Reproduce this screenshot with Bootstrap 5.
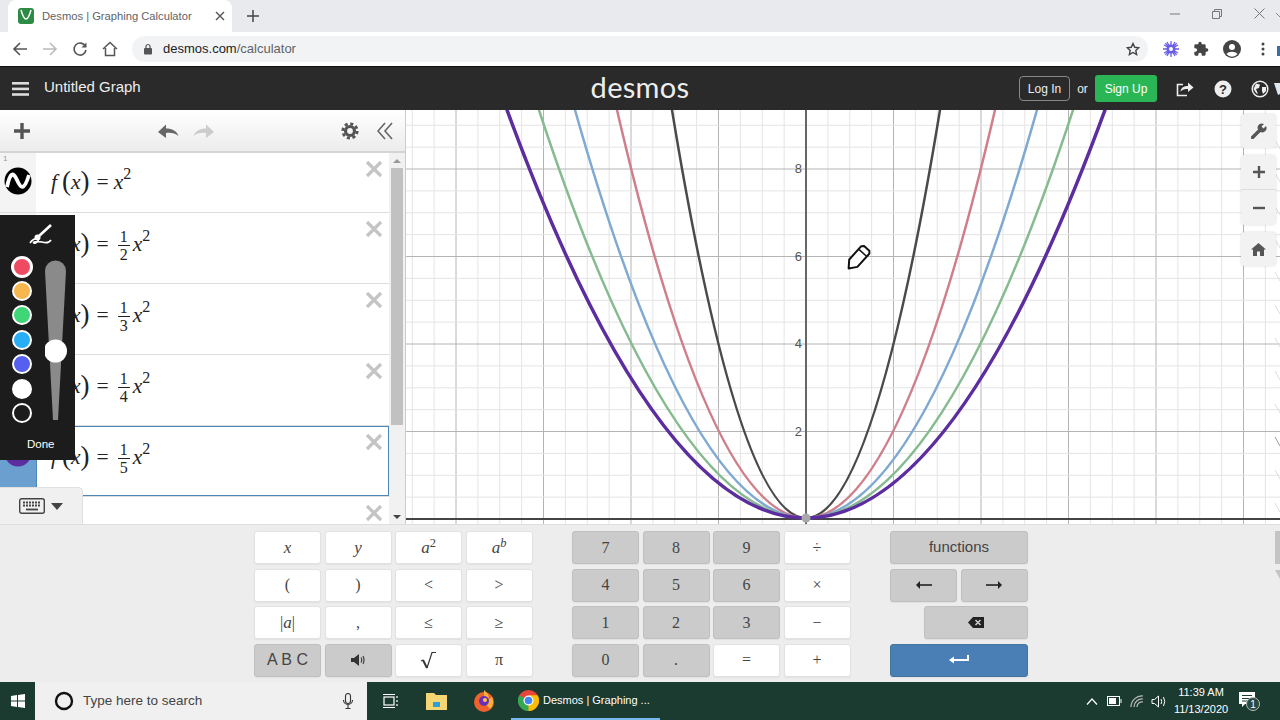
<!DOCTYPE html>
<html lang="en">

<head>
    <meta charset="UTF-8" />
    <meta name="viewport" content="width=device-width, initial-scale=1.0" />
    <title>Desmos | Graphing Calculator</title>
    <link href="https://cdn.jsdelivr.net/npm/bootstrap@5.3.3/dist/css/bootstrap.min.css" rel="stylesheet">
    <style>
        html, body { height: 100%; overflow: hidden; }
        body { font-family: "Liberation Sans", Arial, sans-serif; background: #fff; }
        svg { display: block; flex: none; }

        /* browser chrome */
        .tabstrip { height: 32px; background: #e8eaed; position: relative; }
        .tab { width: 224px; margin-left: 8px; background: #fff; border-radius: 8px 8px 0 0; padding: 0 7px 0 10px; font-size: 11.2px; color: #5f6368; }
        .new-tab { margin-left: 15px; }
        .win-btns { height: 27px; margin-left: auto; gap: 32px; padding-right: 15px; }
        .win-edge { position: absolute; right: 0; top: 13px; }
        .toolbar { height: 34px; background: #fff; padding: 0 0 0 12px; position: relative; }
        .nav-icons { gap: 14px; }
        .urlbar { width: 1016px; height: 26px; margin-left: 14px; border-radius: 13px; background: #f1f3f4; padding: 0 8px 0 11px; font-size: 13px; color: #5f6368; }
        .urlbar b { font-weight: 400; color: #202124; margin-left: 10px; }
        .ext-icons { gap: 14px; margin-left: 15px; }
        .ext-dots { margin-left: 6px; }
        .toolbar-edge { position: absolute; right: 0; top: 14px; width: 3px; height: 10px; background: #3b6ea5; }

        /* desmos header */
        .dcg-header { height: 44px; background: #2a2a2a; color: #eee; border-top: 1px solid #111; }
        .graph-title { font-size: 15px; margin: -2px 0 0 15px; }
        .dcg-left { width: 520px; padding-left: 12px; }
        .dcg-logo { font-family: Lato, "Liberation Sans", sans-serif; font-size: 29px; color: #eee; letter-spacing: .3px; width: 240px; text-align: center; line-height: 44px; margin-top: -3px; }
        .dcg-right { margin-left: auto; font-size: 12px; margin-right: -4px; }
        .btn-login { height: 25px; width: 51px; padding: 0; font-size: 12px; color: #eee; border: 1px solid #888; border-radius: 4px; }
        .btn-signup { height: 27px; width: 62px; padding: 0; font-size: 12px; color: #fff; background: #2bb655; border: 0; border-radius: 3px; }
        .or-text { width: 25px; text-align: center; }
        .ic-share { margin-left: 19px; }
        .ic-help { margin-left: 20px; }
        .ic-globe { margin-left: 19px; }
        .ic-edge { margin-left: 4px; }

        /* expressions */
        .main-area { height: 414px; }
        .left-panel { width: 406px; border-right: 1px solid #ccc; background: #fff; }
        .panel-top { height: 43px; background: linear-gradient(#fff, #ececec); border-bottom: 2px solid #d4d4d4; padding: 0 13px; }
        .ic-undo { margin-left: 127px; }
        .ic-redo { margin-left: 14px; }
        .ic-gear { margin-left: 127px; }
        .ic-collapse { margin-left: 18px; }
        .expr-row { display: flex; border-bottom: 1px solid #ddd; }
        .gutter { width: 36px; flex: none; background: #f4f4f4; position: relative; }
        .row-num { font-size: 8px; color: #999; position: absolute; left: 3px; top: 1px; line-height: 10px; }
        .ic-wave { margin: 14px 0 0 4px; }
        .ic-dot { margin: 13px 0 0 4px; }
        .expr-body { flex: 1; display: flex; justify-content: space-between; padding: 7px 6px 0 15px; }
        .expr-row.active .gutter { background: #6a9fcf; }
        .expr-row.active .expr-body { outline: 1px solid #4f86b8; outline-offset: -1px; }
        .r1 { height: 60px; }
        .r2 { height: 71px; }
        .r6 { height: 27px; border-bottom: 0; }
        .math { font-family: "Liberation Serif", "Times New Roman", serif; font-size: 21.5px; color: #222; display: inline-flex; align-items: center; line-height: 1; height: 46px; margin-top: 2px; }
        .math i { font-style: italic; }
        .math .fn { margin-right: 5px; }
        .math .eq { margin: 0 5px 0 7px; }
        .math .par { font-size: 27px; margin-top: -3px; }
        .math sup { font-size: 16px; top: -9px; line-height: 1; vertical-align: baseline; position: relative; }
        .frac { display: inline-flex; flex-direction: column; align-items: center; font-size: 16px; margin: 0 3px 0 4px; }
        .frac span { padding: 0 2px; line-height: 17px; }
        .frac span:first-child { border-bottom: 1px solid #222; }
        .r1 .math { height: 42px; }
        .scroll { width: 16px; flex: none; background: #f1f1f1; position: relative; padding-top: 15px; }
        .scroll-thumb { width: 12px; height: 257px; margin: 0 auto; background: #c1c1c1; }
        .scroll-up, .scroll-down { position: absolute; left: 4px; width: 0; height: 0; border-left: 4px solid transparent; border-right: 4px solid transparent; }
        .scroll-up { top: 6px; border-bottom: 4px solid #999; }
        .scroll-down { bottom: 5px; border-top: 4px solid #444; }

        /* drawing palette over the list */
        .palette { position: absolute; left: 0; top: 105px; width: 75px; height: 245px; background: #1c1c1c; color: #fff; z-index: 5; }
        .brush { position: absolute; left: 29px; top: 8px; }
        .swatches { position: absolute; left: 12px; top: 41px; gap: 4.4px; }
        .swatch { width: 20px; height: 20px; border-radius: 50%; border: 2px solid #fff; }
        .swatch.on { width: 22px; height: 22px; margin: 0 0 -1.4px -1px; border-width: 3px; }
        .slider { position: absolute; left: 45px; top: 45px; }
        .done { position: absolute; left: 27px; top: 221px; font-size: 11.5px; }
        .kbd-tab { position: absolute; left: 0; bottom: 0; width: 83px; height: 37px; background: #f0f0f0; border: 1px solid #e0e0e0; border-left: 0; border-bottom: 0; border-radius: 0 5px 0 0; z-index: 6; padding-left: 19px; gap: 6px; }

        /* graph */
        .graph { flex: 1; position: relative; background: #fff; overflow: hidden; }
        .graph-btns { position: absolute; left: 835px; top: 4px; width: 35px; gap: 7px; }
        .gbtn { height: 34px; background: #f2f2f2; border-radius: 4px; box-shadow: 0 0 2px rgba(0,0,0,.18); }
        .gbtn-group { box-shadow: 0 0 2px rgba(0,0,0,.18); border-radius: 4px; }
        .gbtn-group .gbtn { height: 35px; box-shadow: none; border-radius: 0; }
        .gbtn-group .gbtn:first-child { border-radius: 4px 4px 0 0; border-bottom: 1px solid #ddd; }
        .gbtn-group .gbtn:last-child { border-radius: 0 0 4px 4px; }

        /* keypad */
        .keypad { height: 158px; background: #ededed; border-top: 1px solid #ddd; padding: 6px 0 0 254px; gap: 39.5px; position: relative; }
        .key-grid { display: grid; grid-template-columns: repeat(4, 67px); grid-auto-rows: 33px; column-gap: 3.5px; row-gap: 4.5px; }
        .fn-grid { display: grid; grid-template-columns: repeat(6, 20px); grid-auto-rows: 33px; column-gap: 3.6px; row-gap: 4.5px; width: 138px; }
        .key { padding: 0; display: flex; align-items: center; justify-content: center; background: #fff; border: 1px solid #e2e2e2; border-radius: 3px; font-family: "Liberation Serif", serif; font-size: 16px; color: #444; box-shadow: 0 1px 1px rgba(0,0,0,.05); }
        .key.grey { background: #cbcbcb; border-color: #bfbfbf; }
        .key.blue { background: #4a7fb5; border-color: #44759f; }
        .key.sans { font-family: "Liberation Sans", sans-serif; }
        .key.fn-key { font-size: 15px; }
        .key i { font-style: italic; font-size: 17px; }
        .key sup { font-size: 12.5px; top: -6px; }
        .key sup i { font-size: 12.5px; }
        .span-6 { grid-column: span 6; }
        .span-3 { grid-column: span 3; }
        .span-5 { grid-column: 2 / span 5; margin-left: 10px; }
        .peek { position: absolute; right: 0; top: 6px; width: 5px; height: 33px; background: #c4c4c4; }
        .peek-tri { position: absolute; right: 0; top: 45px; border-top: 9px solid #c4c4c4; border-left: 5px solid transparent; }

        /* windows taskbar */
        .taskbar { height: 38px; background: #1b3a30; color: #fff; }
        .start { width: 35px; }
        .search-box { width: 332px; background: #f0f0f0; color: #444; font-size: 13.5px; padding: 0 14px 0 19px; }
        .search-box span { margin-left: 9px; }
        .task-icons { margin-left: 15px; }
        .ic-folder { margin-left: 28px; }
        .ic-fox { margin-left: 26px; }
        .task-app { width: 149px; margin-left: 16px; height: 100%; padding-left: 7px; font-size: 11px; gap: 4px; border-bottom: 2px solid #76b9ed; }
        .tray { margin-left: auto; font-size: 11px; padding-right: 18px; }
        .ic-batt { margin-left: 9px; }
        .ic-wifi { margin-left: 8px; }
        .ic-vol { margin-left: 6px; }
        .clock { text-align: center; line-height: 17px; width: 60px; margin: 0 7px 0 3px; }
    </style>
</head>

<body class="d-flex flex-column">

    <!-- browser tabs -->
    <div class="tabstrip d-flex align-items-end">
        <div class="tab d-flex align-items-center h-100">
            <svg width="16" height="16" viewBox="0 0 16 16">
                <rect width="16" height="16" rx="3" fill="#2e8b45" />
                <path d="M3 2Q8 20 13 2" fill="none" stroke="#fff" stroke-width="1.5" />
            </svg>
            <span class="ms-2 flex-grow-1">Desmos | Graphing Calculator</span>
            <svg width="10" height="10" viewBox="0 0 10 10">
                <path d="M1 1L9 9M9 1L1 9" stroke="#555" stroke-width="1.4" />
            </svg>
        </div>
        <svg class="new-tab align-self-center" width="12" height="12" viewBox="0 0 12 12">
            <path d="M6 0V12M0 6H12" stroke="#444" stroke-width="1.5" />
        </svg>
        <div class="win-btns d-flex align-items-center align-self-start">
            <svg width="10" height="10" viewBox="0 0 10 10"><path d="M0 5H10" stroke="#777" /></svg>
            <svg width="10" height="10" viewBox="0 0 10 10" fill="none" stroke="#777"><path d="M.5 2.5H7.5V9.5H.5ZM2.5 2.5V.5H9.5V7.5H7.5" /></svg>
            <svg width="11" height="11" viewBox="0 0 11 11"><path d="M.5 .5L10.5 10.5M10.5 .5L.5 10.5" stroke="#777" /></svg>
        </div>
        <svg class="win-edge" width="4" height="4" viewBox="0 0 4 4"><path d="M0 0L4 4" stroke="#888" /></svg>
    </div>

    <!-- address bar -->
    <div class="toolbar d-flex align-items-center">
        <div class="nav-icons d-flex">
            <svg width="16" height="16" viewBox="0 0 16 16" fill="none" stroke="#555" stroke-width="1.6"><path d="M15 8H2M8 2L2 8L8 14" /></svg>
            <svg width="16" height="16" viewBox="0 0 16 16" fill="none" stroke="#bbb" stroke-width="1.6"><path d="M1 8H14M8 2L14 8L8 14" /></svg>
            <svg width="16" height="16" viewBox="0 0 16 16" fill="none" stroke="#555" stroke-width="1.6"><path d="M13.5 5.5A6 6 0 1 0 14 9" /><path d="M14.5 1.5V6.5H9.5Z" fill="#555" stroke="none" /></svg>
            <svg width="16" height="16" viewBox="0 0 16 16" fill="none" stroke="#555" stroke-width="1.5"><path d="M1 8L8 1.5L15 8M3.5 7V14.5H12.5V7" /></svg>
        </div>
        <div class="urlbar d-flex align-items-center">
            <svg width="10" height="12" viewBox="0 0 10 12"><rect x="1" y="5" width="8" height="6.5" rx="1" fill="#555" /><path d="M3 5V3.5A2 2 0 0 1 7 3.5V5" fill="none" stroke="#555" stroke-width="1.2" /></svg>
            <span><b>desmos.com</b>/calculator</span>
            <svg class="ms-auto" width="14" height="14" viewBox="0 0 24 24" fill="none" stroke="#444" stroke-width="2.4"><path d="M12 2.5L15 9L22 9.8L16.8 14.5L18.2 21.5L12 18L5.8 21.5L7.2 14.5L2 9.8L9 9Z" /></svg>
        </div>
        <div class="ext-icons d-flex align-items-center">
            <svg width="16" height="16" viewBox="0 0 16 16"><path d="M8 0V16M0 8H16M2.3 2.3L13.7 13.7M13.7 2.3L2.3 13.7M4 1L12 15M12 1L4 15M1 4L15 12M1 12L15 4" stroke="#6a5fe8" stroke-width="1.3" /><circle cx="8" cy="8" r="4.5" fill="#6a5fe8" /><circle cx="8" cy="8" r="2" fill="#fff" /></svg>
            <svg width="16" height="16" viewBox="0 0 24 24" fill="#444"><path d="M20.5 11H19V7a2 2 0 0 0-2-2h-4V3.5a2.5 2.5 0 0 0-5 0V5H4a2 2 0 0 0-2 2v3.8h1.5a2.7 2.7 0 0 1 0 5.4H2V20a2 2 0 0 0 2 2h3.8v-1.5a2.7 2.7 0 0 1 5.4 0V22H17a2 2 0 0 0 2-2v-4h1.5a2.5 2.5 0 0 0 0-5z" /></svg>
            <svg width="18" height="18" viewBox="0 0 18 18"><circle cx="9" cy="9" r="9" fill="#444" /><circle cx="9" cy="7" r="3" fill="#fff" /><path d="M3.5 14a6.5 5 0 0 1 11 0a7 7 0 0 1-11 0z" fill="#fff" /></svg>
            <svg class="ext-dots" width="4" height="14" viewBox="0 0 4 14" fill="#444"><circle cx="2" cy="2" r="1.5" /><circle cx="2" cy="7" r="1.5" /><circle cx="2" cy="12" r="1.5" /></svg>
        </div>
        <div class="toolbar-edge"></div>
    </div>

    <!-- desmos header -->
    <div class="dcg-header d-flex align-items-center">
        <div class="dcg-left d-flex align-items-center">
            <svg width="17" height="14" viewBox="0 0 17 14" fill="#ddd"><rect width="17" height="2.6" /><rect y="5.6" width="17" height="2.6" /><rect y="11.2" width="17" height="2.6" /></svg>
            <span class="graph-title">Untitled Graph</span>
        </div>
        <div class="dcg-logo">desmos</div>
        <div class="dcg-right d-flex align-items-center">
            <button class="btn btn-login">Log In</button>
            <span class="or-text">or</span>
            <button class="btn btn-signup">Sign Up</button>
            <svg class="ic-share" width="18" height="16" viewBox="0 0 18 16" fill="none" stroke="#eee" stroke-width="1.6"><path d="M11 14.5H1.5V3.5H7" /><path d="M4.5 10.5C5 6.5 8 5 12 5V1.5L17.5 6.5L12 11V8C9 8 6.5 8.5 4.5 10.5Z" fill="#eee" stroke="none" /></svg>
            <svg class="ic-help" width="18" height="18" viewBox="0 0 18 18"><circle cx="9" cy="9" r="8.5" fill="#eee" /><text x="9" y="13.5" text-anchor="middle" font-family="Liberation Sans" font-weight="700" font-size="13" fill="#2a2a2a">?</text></svg>
            <svg class="ic-globe" width="18" height="18" viewBox="0 0 18 18"><circle cx="9" cy="9" r="7.8" fill="#2a2a2a" stroke="#eee" stroke-width="1.5" /><path d="M5 3.5L9 4.5L8 8L5 9L7 14L5 13L2.5 9ZM11 7H15L15 11L12 14L11 11Z" fill="#eee" /></svg>
            <svg class="ic-edge" width="11" height="12" viewBox="0 0 11 12"><path d="M1 0H11V9L5 12Z" fill="#dfe8ee" /></svg>
        </div>
    </div>

    <div class="main-area d-flex position-relative">
        <!-- expression list -->
        <div class="left-panel d-flex flex-column">
            <div class="panel-top d-flex align-items-center">
                <svg width="18" height="18" viewBox="0 0 18 18"><path d="M9 1V17M1 9H17" stroke="#555" stroke-width="3.4" /></svg>
                <svg class="ic-undo" width="21" height="14" viewBox="0 0 21 14" fill="#666"><path d="M0 8L8 0.5V4.5C14 4.5 19 7 20.5 12C17 9 13 8.5 8 9V14Z" /></svg>
                <svg class="ic-redo" width="21" height="14" viewBox="0 0 21 14" fill="#ccc"><path d="M21 8L13 0.5V4.5C7 4.5 2 7 0.5 12C4 9 8 8.5 13 9V14Z" /></svg>
                <svg class="ic-gear" width="18" height="18" viewBox="0 0 18 18" fill="none" stroke="#555"><circle cx="9" cy="9" r="4.5" stroke-width="3.2" /><circle cx="9" cy="9" r="7.2" stroke-width="2.8" stroke-dasharray="3.1 2.55" /></svg>
                <svg class="ic-collapse" width="16" height="18" viewBox="0 0 16 18" fill="none" stroke="#666" stroke-width="1.6"><path d="M8 1L1 9L8 17M15 1L8 9L15 17" /></svg>
            </div>
            <div class="d-flex flex-grow-1">
                <div class="flex-grow-1">
                    <div class="expr-row r1">
                        <div class="gutter"><span class="row-num">1</span>
                            <svg class="ic-wave" width="28" height="28" viewBox="0 0 28 28"><circle cx="14" cy="14" r="13.5" fill="#000" /><path d="M3 20C6 6 9 4 13 13S20 24 25 8" fill="none" stroke="#fff" stroke-width="3.8" /></svg>
                        </div>
                        <div class="expr-body">
                            <span class="math"><i class="fn">f</i><span class="par">(</span><i>x</i><span class="par">)</span><span class="eq">=</span><i>x</i><sup>2</sup></span>
                            <svg width="18" height="18" viewBox="0 0 18 18"><path d="M2 2L16 16M16 2L2 16" stroke="#c4c4c4" stroke-width="3.2" /></svg>
                        </div>
                    </div>
                    <div class="expr-row r2">
                        <div class="gutter"></div>
                        <div class="expr-body">
                            <span class="math"><i class="fn">f</i><span class="par">(</span><i>x</i><span class="par">)</span><span class="eq">=</span><span class="frac"><span>1</span><span>2</span></span><i>x</i><sup>2</sup></span>
                            <svg width="18" height="18" viewBox="0 0 18 18"><path d="M2 2L16 16M16 2L2 16" stroke="#c4c4c4" stroke-width="3.2" /></svg>
                        </div>
                    </div>
                    <div class="expr-row r2">
                        <div class="gutter"></div>
                        <div class="expr-body">
                            <span class="math"><i class="fn">f</i><span class="par">(</span><i>x</i><span class="par">)</span><span class="eq">=</span><span class="frac"><span>1</span><span>3</span></span><i>x</i><sup>2</sup></span>
                            <svg width="18" height="18" viewBox="0 0 18 18"><path d="M2 2L16 16M16 2L2 16" stroke="#c4c4c4" stroke-width="3.2" /></svg>
                        </div>
                    </div>
                    <div class="expr-row r2">
                        <div class="gutter"></div>
                        <div class="expr-body">
                            <span class="math"><i class="fn">f</i><span class="par">(</span><i>x</i><span class="par">)</span><span class="eq">=</span><span class="frac"><span>1</span><span>4</span></span><i>x</i><sup>2</sup></span>
                            <svg width="18" height="18" viewBox="0 0 18 18"><path d="M2 2L16 16M16 2L2 16" stroke="#c4c4c4" stroke-width="3.2" /></svg>
                        </div>
                    </div>
                    <div class="expr-row r2 active">
                        <div class="gutter">
                            <svg class="ic-dot" width="28" height="28" viewBox="0 0 28 28"><circle cx="14" cy="14" r="13.5" fill="#5b2d9e" /></svg>
                        </div>
                        <div class="expr-body">
                            <span class="math"><i class="fn">f</i><span class="par">(</span><i>x</i><span class="par">)</span><span class="eq">=</span><span class="frac"><span>1</span><span>5</span></span><i>x</i><sup>2</sup></span>
                            <svg width="18" height="18" viewBox="0 0 18 18"><path d="M2 2L16 16M16 2L2 16" stroke="#c4c4c4" stroke-width="3.2" /></svg>
                        </div>
                    </div>
                    <div class="expr-row r6">
                        <div class="gutter"></div>
                        <div class="expr-body">
                            <span></span>
                            <svg width="18" height="18" viewBox="0 0 18 18"><path d="M2 2L16 16M16 2L2 16" stroke="#c4c4c4" stroke-width="3.2" /></svg>
                        </div>
                    </div>
                </div>
                <div class="scroll">
                    <div class="scroll-up"></div>
                    <div class="scroll-thumb"></div>
                    <div class="scroll-down"></div>
                </div>
            </div>
        </div>

        <!-- drawing palette -->
        <div class="palette">
            <svg class="brush" width="24" height="24" viewBox="0 0 24 24" fill="none" stroke="#fff"><path d="M10 13L22 2" stroke-width="2.6" /><path d="M1 20C3 17 5 15 8 16C11 17 7 21 5 20C3 19 8 18 13 19C16 20 20 20 22 17" stroke-width="1.7" /><circle cx="8.5" cy="14.5" r="3" fill="#fff" stroke="none" /></svg>
            <div class="swatches d-flex flex-column">
                <div class="swatch on bg-swatch-red"></div>
                <div class="swatch bg-swatch-orange"></div>
                <div class="swatch bg-swatch-green"></div>
                <div class="swatch bg-swatch-blue"></div>
                <div class="swatch bg-swatch-indigo"></div>
                <div class="swatch bg-swatch-white"></div>
                <div class="swatch bg-swatch-black"></div>
            </div>
            <svg class="slider" width="22" height="162" viewBox="0 0 22 162">
                <path d="M0 11A10.5 10.5 0 0 1 21 11L13 160H8Z" fill="#8a8a8a" />
                <circle cx="10.5" cy="91" r="11.5" fill="#fff" />
            </svg>
            <span class="done">Done</span>
        </div>
        <div class="kbd-tab d-flex align-items-center">
            <svg width="26" height="16" viewBox="0 0 26 16" fill="none" stroke="#444"><rect x=".7" y=".7" width="24.6" height="14.6" rx="2" stroke-width="1.4" /><path d="M4 4.5H22M4 7.5H22" stroke-width="1.8" stroke-dasharray="2 1" /><path d="M7 11.5H19" stroke-width="1.8" /></svg>
            <svg width="12" height="7" viewBox="0 0 12 7"><path d="M0 0H12L6 7Z" fill="#444" /></svg>
        </div>

        <!-- graph paper -->
        <div class="graph">
            <svg id="paper" width="874" height="414" viewBox="406 110 874 414">
                <g id="grid"></g>
                <g font-family="Liberation Sans, sans-serif" font-size="13" fill="#555" text-anchor="end">
                    <text x="802" y="173">8</text>
                    <text x="802" y="261">6</text>
                    <text x="802" y="348">4</text>
                    <text x="802" y="436">2</text>
                </g>
                <g fill="none" stroke-linecap="round">
                    <path d="M672 110Q806 926 940 110" stroke="#4a4a4a" stroke-width="2.5" />
                    <path d="M617 110Q806 926 995 110" stroke="#cf7f8a" stroke-width="2.5" />
                    <path d="M575 110Q806 926 1037 110" stroke="#7fa9d2" stroke-width="2.5" />
                    <path d="M539 110Q806 926 1073 110" stroke="#86bb90" stroke-width="2.5" />
                    <path d="M507 110Q806 926 1105 110" stroke="#5b2d9e" stroke-width="3.5" />
                </g>
                <circle cx="806" cy="518" r="4.5" fill="#a8a8a8" />
                <g transform="translate(858 258) rotate(42)">
                    <path d="M-5.5 -11L-3.5 -13H3.5L5.5 -11V7L0 14L-5.5 7Z" fill="#fff" stroke="#111" stroke-width="2" stroke-linejoin="round" />
                    <path d="M-5.5 -7H5.5" stroke="#111" stroke-width="1.5" />
                </g>
            </svg>
            <div class="graph-btns d-flex flex-column">
                <div class="gbtn d-flex align-items-center justify-content-center">
                    <svg width="16" height="16" viewBox="0 0 16 16"><path d="M1.5 14.5L8 8" stroke="#555" stroke-width="3.4" stroke-linecap="round" /><path d="M7 6.5A4.3 4.3 0 0 1 13 1L10.5 3.5L12.5 5.5L15 3A4.3 4.3 0 0 1 9.5 9Z" fill="#555" /></svg>
                </div>
                <div class="gbtn-group d-flex flex-column">
                    <div class="gbtn d-flex align-items-center justify-content-center">
                        <svg width="12" height="12" viewBox="0 0 12 12"><path d="M6 0V12M0 6H12" stroke="#555" stroke-width="2.4" /></svg>
                    </div>
                    <div class="gbtn d-flex align-items-center justify-content-center">
                        <svg width="12" height="12" viewBox="0 0 12 12"><path d="M0 6H12" stroke="#555" stroke-width="2.4" /></svg>
                    </div>
                </div>
                <div class="gbtn d-flex align-items-center justify-content-center">
                    <svg width="15" height="13" viewBox="0 0 15 13" fill="#555"><path d="M7.5 0L15 6.5H13V13H9V8.5H6V13H2V6.5H0Z" /></svg>
                </div>
            </div>
        </div>
    </div>

    <!-- math keypad -->
    <div class="keypad d-flex align-items-start">
        <div class="key-grid">
            <button class="btn key"><i>x</i></button>
            <button class="btn key"><i>y</i></button>
            <button class="btn key"><span><i>a</i><sup>2</sup></span></button>
            <button class="btn key"><span><i>a</i><sup><i>b</i></sup></span></button>
            <button class="btn key">(</button>
            <button class="btn key">)</button>
            <button class="btn key">&lt;</button>
            <button class="btn key">&gt;</button>
            <button class="btn key"><span>|<i>a</i>|</span></button>
            <button class="btn key">,</button>
            <button class="btn key">≤</button>
            <button class="btn key">≥</button>
            <button class="btn key grey sans">A B C</button>
            <button class="btn key grey">
                <svg width="14" height="12" viewBox="0 0 14 12"><path d="M0 4H3L8 0V12L3 8H0Z" fill="#333" /><path d="M10 3.5Q11.5 6 10 8.5M12 2Q14 6 12 10" fill="none" stroke="#333" stroke-width="1.1" /></svg>
            </button>
            <button class="btn key">
                <svg width="20" height="20" viewBox="0 0 20 20" fill="none" stroke="#333"><path d="M2 11L4 10" stroke-width="1.2" /><path d="M4 10L8 18" stroke-width="2" /><path d="M8 18L13 2.5H17" stroke-width="1.2" /></svg>
            </button>
            <button class="btn key">π</button>
        </div>
        <div class="key-grid">
            <button class="btn key grey">7</button>
            <button class="btn key grey">8</button>
            <button class="btn key grey">9</button>
            <button class="btn key">÷</button>
            <button class="btn key grey">4</button>
            <button class="btn key grey">5</button>
            <button class="btn key grey">6</button>
            <button class="btn key">×</button>
            <button class="btn key grey">1</button>
            <button class="btn key grey">2</button>
            <button class="btn key grey">3</button>
            <button class="btn key">−</button>
            <button class="btn key grey">0</button>
            <button class="btn key grey">.</button>
            <button class="btn key">=</button>
            <button class="btn key">+</button>
        </div>
        <div class="fn-grid">
            <button class="btn key grey sans fn-key span-6">functions</button>
            <button class="btn key grey span-3">
                <svg width="16" height="8" viewBox="0 0 16 8"><path d="M16 4H3" stroke="#222" stroke-width="1.6" /><path d="M4 0L0 4L4 8Z" fill="#222" /></svg>
            </button>
            <button class="btn key grey span-3">
                <svg width="16" height="8" viewBox="0 0 16 8"><path d="M0 4H13" stroke="#222" stroke-width="1.6" /><path d="M12 0L16 4L12 8Z" fill="#222" /></svg>
            </button>
            <button class="btn key grey span-5">
                <svg width="16" height="11" viewBox="0 0 16 11"><path d="M5 0H16V11H5L0 5.5Z" fill="#222" /><path d="M7.5 3L12.5 8M12.5 3L7.5 8" stroke="#ccc" stroke-width="1.5" /></svg>
            </button>
            <button class="btn key blue span-6">
                <svg width="20" height="10" viewBox="0 0 20 10"><path d="M19 0V5H3" fill="none" stroke="#fff" stroke-width="2" /><path d="M5 1.5L0 5L5 8.5Z" fill="#fff" /></svg>
            </button>
        </div>
        <div class="peek"></div>
        <div class="peek-tri"></div>
    </div>

    <!-- windows taskbar -->
    <div class="taskbar d-flex align-items-center">
        <div class="start d-flex justify-content-center">
            <svg width="14" height="14" viewBox="0 0 14 14" fill="#fff"><path d="M0 2L6 1.1V6.5H0ZM7 1L14 0V6.5H7ZM0 7.5H6V12.9L0 12ZM7 7.5H14V14L7 13Z" /></svg>
        </div>
        <div class="search-box d-flex align-items-center h-100">
            <svg width="20" height="20" viewBox="0 0 20 20"><circle cx="10" cy="10" r="8" fill="none" stroke="#111" stroke-width="2.4" /></svg>
            <span>Type here to search</span>
            <svg class="ms-auto" width="10" height="16" viewBox="0 0 10 16" fill="none" stroke="#333" stroke-width="1.1"><rect x="2.5" y=".5" width="5" height="10" rx="2.5" /><path d="M.5 7A4.5 4.5 0 0 0 9.5 7M5 11.5V15M2.5 15.5H7.5" /></svg>
        </div>
        <div class="task-icons d-flex align-items-center">
            <svg width="16" height="16" viewBox="0 0 16 16" fill="none" stroke="#fff" stroke-width="1.2"><rect x="2" y="4" width="10" height="8" /><path d="M1 1.5H13M1 14.5H13M15 3V5M15 7V9M15 11V13" /></svg>
            <svg class="ic-folder" width="21" height="18" viewBox="0 0 21 18"><path d="M0 1H8L10 3H21V18H0Z" fill="#f6d673" /><rect x="7" y="10" width="7" height="5" fill="#2f9fd8" /></svg>
            <svg class="ic-fox" width="22" height="22" viewBox="0 0 22 22"><circle cx="11" cy="12" r="10" fill="#f0622d" /><path d="M11 0C15 3 17 7 15 10L19 7C21 12 20 16 17 19L11 12Z" fill="#fbb03b" /><circle cx="11" cy="11" r="5" fill="#6b2fb5" /><circle cx="12" cy="10" r="2" fill="#f9c74f" /></svg>
        </div>
        <div class="task-app d-flex align-items-center">
            <svg width="21" height="21" viewBox="0 0 21 21"><circle cx="10.5" cy="10.5" r="10.5" fill="#e8453c" /><path d="M10.5 10.5L1.4 5.2A10.5 10.5 0 0 0 10.5 21L15.5 12Z" fill="#34a853" /><path d="M10.5 10.5L10.5 21A10.5 10.5 0 0 0 19.6 5.2H10.5Z" fill="#fbbc05" /><circle cx="10.5" cy="10.5" r="5" fill="#fff" /><circle cx="10.5" cy="10.5" r="3.8" fill="#4285f4" /></svg>
            <span>Desmos | Graphing ...</span>
        </div>
        <div class="tray d-flex align-items-center">
            <svg width="12" height="7" viewBox="0 0 12 7" fill="none" stroke="#fff" stroke-width="1.2"><path d="M1 6.5L6 1L11 6.5" /></svg>
            <svg class="ic-batt" width="15" height="10" viewBox="0 0 15 10" fill="none" stroke="#fff"><rect x=".5" y=".5" width="12" height="9" /><rect x="2" y="2" width="7" height="6" fill="#fff" stroke="none" /><path d="M14 3V7" /></svg>
            <svg class="ic-wifi" width="15" height="13" viewBox="0 0 15 13" fill="none" stroke="#bbb" stroke-width="1.2"><path d="M1 12A11 11 0 0 1 13 1M4 12A8 8 0 0 1 13 4M7 12A5 5 0 0 1 13 7" /></svg>
            <svg class="ic-vol" width="17" height="13" viewBox="0 0 17 13" fill="none" stroke="#fff"><path d="M1 4.5H3.5L7.5 1V12L3.5 8.5H1Z" /><path d="M10 4Q11.5 6.5 10 9M12.5 2Q15 6.5 12.5 11" /></svg>
            <div class="clock">11:39 AM<br>11/13/2020</div>
            <svg width="24" height="24" viewBox="0 0 24 24"><path d="M1 3H17V15H7L4 18V15H1Z" fill="#fff" /><path d="M4 6.5H14M4 9.5H14M4 12H10" stroke="#1b3a30" /><circle cx="15" cy="15" r="6.5" fill="#2a4a40" stroke="#bbb" /><text x="15" y="18.5" text-anchor="middle" font-family="Liberation Sans" font-size="10" fill="#fff">1</text></svg>
        </div>
    </div>

    <script src="https://cdn.jsdelivr.net/npm/bootstrap@5.3.3/dist/js/bootstrap.bundle.min.js"></script>
    <script>
        // swatch colours come from this list
        const swatchColors = { red: '#ee4b63', orange: '#f6b74e', green: '#3ed676', blue: '#29aef5', indigo: '#5560f0', white: '#fff', black: '#1c1c1c' };
        Object.keys(swatchColors).forEach(function (name) {
            document.querySelector('.bg-swatch-' + name).style.background = swatchColors[name];
        });

        // graph paper: 43.75px per unit, minor line every half unit
        const grid = document.getElementById('grid');
        const ox = 806, oy = 519, step = 21.875;
        let html = '';
        for (let i = -19; i <= 22; i++) {
            const x = ox + i * step;
            if (i === 0) continue;
            html += '<path d="M' + x + ' 110V524" stroke="' + (i % 4 === 0 ? '#b4b4b4' : '#e4e4e4') + '" />';
        }
        for (let j = -1; j <= 18; j++) {
            const y = oy - j * step;
            if (j === 0) continue;
            html += '<path d="M406 ' + y + 'H1280" stroke="' + (j % 4 === 0 ? '#b4b4b4' : '#e4e4e4') + '" />';
        }
        html += '<path d="M' + ox + ' 110V524" stroke="#666" stroke-width="2" />';
        html += '<path d="M406 ' + oy + 'H1280" stroke="#444" stroke-width="2" />';
        for (let y = 140; y < 510; y += 33) {
            html += '<path d="M1275 ' + y + 'L1280 ' + (y + 9) + '" stroke="' + (y === 437 ? '#999' : '#ddd') + '" />';
        }
        grid.innerHTML = html;
    </script>
</body>

</html>
